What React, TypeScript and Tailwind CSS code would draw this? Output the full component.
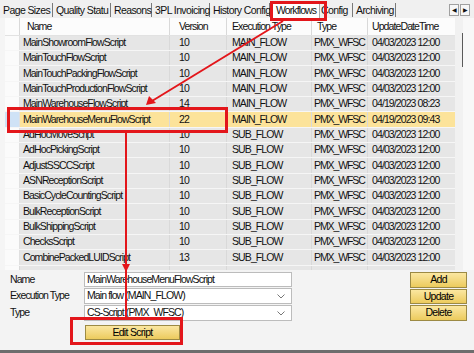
import React from 'react';

const rows = [
  { name: 'MainShowroomFlowScript', ver: '10', exec: 'MAIN_FLOW', date: '04/03/2023 12:00' },
  { name: 'MainTouchFlowScript', ver: '10', exec: 'MAIN_FLOW', date: '04/03/2023 12:00' },
  { name: 'MainTouchPackingFlowScript', ver: '10', exec: 'MAIN_FLOW', date: '04/03/2023 12:00' },
  { name: 'MainTouchProductionFlowScript', ver: '10', exec: 'MAIN_FLOW', date: '04/03/2023 12:00' },
  { name: 'MainWarehouseFlowScript', ver: '14', exec: 'MAIN_FLOW', date: '04/19/2023 08:23' },
  { name: 'MainWarehouseMenuFlowScript', ver: '22', exec: 'MAIN_FLOW', date: '04/19/2023 09:43', selected: true },
  { name: 'AdHocMoveScript', ver: '10', exec: 'SUB_FLOW', date: '04/03/2023 12:00' },
  { name: 'AdHocPickingScript', ver: '10', exec: 'SUB_FLOW', date: '04/03/2023 12:00' },
  { name: 'AdjustSSCCScript', ver: '10', exec: 'SUB_FLOW', date: '04/03/2023 12:00' },
  { name: 'ASNReceptionScript', ver: '10', exec: 'SUB_FLOW', date: '04/03/2023 12:00' },
  { name: 'BasicCycleCountingScript', ver: '10', exec: 'SUB_FLOW', date: '04/03/2023 12:00' },
  { name: 'BulkReceptionScript', ver: '10', exec: 'SUB_FLOW', date: '04/03/2023 12:00' },
  { name: 'BulkShippingScript', ver: '10', exec: 'SUB_FLOW', date: '04/03/2023 12:00' },
  { name: 'ChecksScript', ver: '10', exec: 'SUB_FLOW', date: '04/03/2023 12:00' },
  { name: 'CombinePackedLUIDScript', ver: '13', exec: 'SUB_FLOW', date: '04/03/2023 12:00' },
];

const tabs = [
  { label: 'Page Sizes', w: 'w-[53px]' },
  { label: 'Quality Statu', w: 'w-[58px]' },
  { label: 'Reasons', w: 'w-[41px]' },
  { label: '3PL Invoicing', w: 'w-[58px]' },
  { label: 'History Config', w: 'w-[60px]' },
];

const cols = 'grid grid-cols-[15px_150px_57px_85px_56px_87px]';
const cell = 'flex items-center border-r border-[#d9d9d9] overflow-hidden whitespace-nowrap';

function YellowButton({ label, className }: { label: string; className: string }) {
  return (
    <div
      className={`flex items-center justify-center border border-[#9c8a44] bg-gradient-to-b from-[#fbe7a0] to-[#eccb5c] text-[10.5px] tracking-[-0.7px] text-black ${className}`}
    >
      {label}
    </div>
  );
}

function Chevron() {
  return (
    <svg width="8" height="5" viewBox="0 0 8 5" className="mr-[6px]">
      <path d="M0.5 0.5 L4 4 L7.5 0.5" fill="none" stroke="#777" strokeWidth="1" />
    </svg>
  );
}

export default function App() {
  return (
    <div className="relative w-[474px] h-[353px] overflow-hidden bg-[#f3f3f3] font-['Liberation_Sans',Arial,sans-serif] text-[#111]">
      {/* tab strip */}
      <div className="flex h-[18px] text-[10.5px] tracking-[-0.6px] bg-[#f0f0f0]">
        {tabs.map((t) => (
          <div key={t.label} className={`${t.w} mt-[3px] h-[14px] pl-[3px] border-r border-[#7a7a7a] leading-[14px] whitespace-nowrap`}>
            {t.label}
          </div>
        ))}
        <div className="w-[50px] h-[18px] mt-[1px] pl-[5px] bg-white border-x border-t border-[#a8a8a8] leading-[16px] tracking-[-0.9px] whitespace-nowrap">
          Workflows
        </div>
        <div className="w-[33px] mt-[3px] h-[14px] pl-[1px] border-r border-[#7a7a7a] leading-[14px]">Config</div>
        <div className="w-[43px] mt-[3px] h-[14px] pl-[3px] border-r border-[#7a7a7a] leading-[14px]">Archiving</div>
        <div className="flex-1" />
        <div className="flex gap-[1px] mt-[4px] mr-[4px] h-[12px]">
          <div className="w-[10px] h-[12px] border border-[#a0a0a0] bg-[#f7f7f7] flex items-center justify-center text-[6px]">◀</div>
          <div className="w-[10px] h-[12px] border border-[#a0a0a0] bg-[#f7f7f7] flex items-center justify-center text-[6px]">▶</div>
        </div>
      </div>

      {/* grid */}
      <div className="flex h-[252px] bg-white">
        <div className="w-[5px] bg-[#f5f5f5]" />
        <div className="w-[450px] text-[10.5px] tracking-[-0.9px] overflow-hidden">
          <div className={`${cols} h-[18px] bg-[#fcfcfc] border-b border-[#e2e2e2]`}>
            <div className={cell} />
            <div className={`${cell} pl-[7px]`}>Name</div>
            <div className={`${cell} pl-[9px]`}>Version</div>
            <div className={`${cell} pl-[5px]`}>Execution Type</div>
            <div className={`${cell} pl-[5px]`}>Type</div>
            <div className={`${cell} pl-[4px] border-r-0`}>UpdateDateTime</div>
          </div>
          {rows.map((r, i) => (
            <div
              key={r.name}
              className={`${cols} ${i % 3 === 2 ? 'h-[16px]' : 'h-[15px]'} border-b border-[#f6f6f6] ${r.selected ? 'bg-[#fce39a]' : 'bg-[#e6e6e6]'}`}
            >
              <div className={`${cell} ${r.selected ? 'bg-[#cfe2f6]' : 'bg-[#fbfbfb]'} border-[#e0e0e0]`} />
              <div className={`${cell} pl-[3px]`}>{r.name}</div>
              <div className={`${cell} pl-[9px]`}>{r.ver}</div>
              <div className={`${cell} pl-[5px]`}>{r.exec}</div>
              <div className={`${cell} pl-[2px] tracking-[-1.1px]`}>PMX_WFSC</div>
              <div className={`${cell} pl-[4px] border-r-0`}>{r.date}</div>
            </div>
          ))}
          <div className={`${cols} h-[10px] bg-[#e6e6e6]`}>
            <div className={`${cell} bg-[#fbfbfb]`} />
            <div className={cell} />
            <div className={cell} />
            <div className={cell} />
            <div className={cell} />
            <div className={`${cell} border-r-0`} />
          </div>
        </div>
        <div className="flex-1 bg-[#f1f1f1] flex">
          <div className="w-[7px]" />
          <div className="w-[1px] h-[34px] mt-[15px] bg-[#5a5a5a]" />
          <div className="flex-1 bg-[#f8f8f8]" />
        </div>
      </div>

      {/* form */}
      <div className="flex h-[80px] pt-[2px] text-[10.5px] tracking-[-0.9px]">
        <div className="pl-[10px]">
          <div className="grid grid-cols-[74px_208px] gap-y-[1px]">
            <div className="h-[15px] flex items-center">Name</div>
            <div className="h-[15px] flex items-center pl-[2px] bg-white border border-[#bcbcbc]">MainWarehouseMenuFlowScript</div>
            <div className="h-[16px] flex items-center">Execution Type</div>
            <div className="h-[16px] flex items-center justify-between pl-[2px] bg-white border border-[#bcbcbc]">
              <span>Main flow (MAIN_FLOW)</span>
              <Chevron />
            </div>
            <div className="h-[16px] flex items-center">Type</div>
            <div className="h-[16px] flex items-center justify-between pl-[2px] bg-white border border-[#bcbcbc]">
              <span>CS-Script (PMX_WFSC)</span>
              <Chevron />
            </div>
          </div>
          <YellowButton label="Edit Script" className="ml-[75px] mt-[4px] w-[95px] h-[15px]" />
        </div>
        <div className="flex-1" />
        <div className="flex flex-col gap-[1px] mr-[7px]">
          <YellowButton label="Add" className="w-[57px] h-[16px]" />
          <YellowButton label="Update" className="w-[57px] h-[15px]" />
          <YellowButton label="Delete" className="w-[57px] h-[16px]" />
        </div>
      </div>
      <div className="h-[3px] bg-[#6d6d6d]" />

      {/* annotations */}
      <div className="absolute left-[270px] top-[1px] w-[57px] h-[20px] border-[3px] border-[#e3161b]" />
      <div className="absolute left-[7px] top-[107px] w-[221px] h-[26px] border-[3px] border-[#e3161b]" />
      <div className="absolute left-[70px] top-[317px] w-[113px] h-[28px] border-[3px] border-[#e3161b]" />
      <svg className="absolute inset-0 pointer-events-none" width="474" height="353" viewBox="0 0 474 353">
        <line x1="283" y1="21" x2="152" y2="101" stroke="#e3161b" strokeWidth="2" />
        <path d="M146 105 L149 96 L156 103 Z" fill="#e3161b" />
        <line x1="126" y1="133" x2="126" y2="317" stroke="#e3161b" strokeWidth="2" />
        <path d="M122 264 L130 264 L126 272 Z" fill="#e3161b" />
      </svg>
    </div>
  );
}
